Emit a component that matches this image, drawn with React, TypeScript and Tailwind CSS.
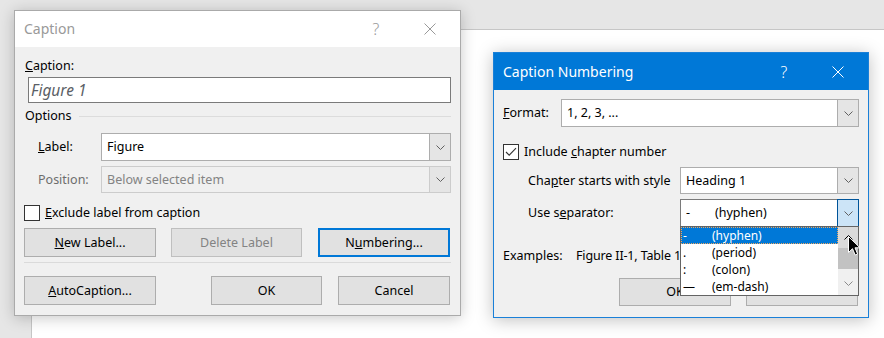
import React from "react";
import clsx from "clsx";

function Chevron({ color = "#606060", up = false }: { color?: string; up?: boolean }) {
  return (
    <svg width="9" height="5" viewBox="0 0 9 5">
      <path d={up ? "M0.5 4.5 L4.5 0.5 L8.5 4.5" : "M0.5 0.5 L4.5 4.5 L8.5 0.5"} fill="none" stroke={color} strokeWidth="1" />
    </svg>
  );
}

function XIcon({ color }: { color: string }) {
  return (
    <svg width="12" height="12" viewBox="0 0 12 12">
      <path d="M0.5 0.5 L11.5 11.5 M11.5 0.5 L0.5 11.5" stroke={color} strokeWidth="1" fill="none" />
    </svg>
  );
}

function TitleBar({ title, active }: { title: string; active: boolean }) {
  const c = active ? "#ffffff" : "#999999";
  return (
    <div
      className={clsx(
        "flex items-center pl-[9px] pr-[7px] shrink-0",
        active ? "h-[37px] bg-[#0078d7] text-white" : "h-[36px] bg-white text-[#999999]"
      )}
    >
      <span className="text-[14px] leading-none">{title}</span>
      <div className="ml-auto flex gap-[8px]">
        <div className="w-[46px] flex items-center justify-center text-[16px] font-light leading-none">?</div>
        <div className="w-[46px] flex items-center justify-center">
          <XIcon color={c} />
        </div>
      </div>
    </div>
  );
}

function Combo({
  value,
  className,
  disabled = false,
  focused = false,
}: {
  value: React.ReactNode;
  className?: string;
  disabled?: boolean;
  focused?: boolean;
}) {
  return (
    <div
      className={clsx(
        "flex items-stretch border",
        disabled ? "border-[#cccccc] bg-[#f0f0f0] text-[#838383]" : focused ? "border-[#7a7a7a] bg-white text-black" : "border-[#adadad] bg-white text-black",
        className
      )}
    >
      <div className="flex-1 flex items-center pl-[5px] whitespace-nowrap">{value}</div>
      <div
        className={clsx(
          "w-[21px] flex items-center justify-center",
          focused
            ? "bg-[#cce4f7] border border-[#005499] -my-px -mr-px w-[22px]"
            : disabled
            ? "bg-[#e5e5e5] border-l border-[#cccccc]"
            : "bg-[#e5e5e5] border-l border-[#adadad]"
        )}
      >
        <Chevron />
      </div>
    </div>
  );
}

function Btn({
  children,
  className,
  disabled = false,
  def = false,
}: {
  children: React.ReactNode;
  className?: string;
  disabled?: boolean;
  def?: boolean;
}) {
  return (
    <div
      className={clsx(
        "flex items-center justify-center bg-[#e1e1e1]",
        def ? "border-2 border-[#0078d7]" : disabled ? "border border-[#bfbfbf] text-[#838383]" : "border border-[#adadad]",
        className
      )}
    >
      {children}
    </div>
  );
}

function Check({ checked }: { checked: boolean }) {
  return (
    <div className="w-[16px] h-[16px] border border-[#333333] bg-white flex items-center justify-center shrink-0">
      {checked && (
        <svg width="12" height="10" viewBox="0 0 12 10">
          <path d="M1 5 L4.2 8.2 L11 1.2" fill="none" stroke="#333333" strokeWidth="1.1" />
        </svg>
      )}
    </div>
  );
}

function CaptionDialog() {
  return (
    <div className="absolute left-[14px] top-[10px] w-[447px] h-[306px] border border-[#aaaaaa] bg-[#f0f0f0] shadow-[0_2px_14px_rgba(0,0,0,0.22)] flex flex-col">
      <TitleBar title="Caption" active={false} />
      <div className="flex flex-col">
        <div className="mt-[11px] h-[16px] leading-[16px] pl-[10px]">
          <u>C</u>aption:
        </div>
        <div className="mt-[3px] ml-[13px] w-[423px] h-[26px] border border-[#7a7a7a] bg-white flex items-center pl-[2px] italic text-[15.5px] text-[#5b5f66]">
          Figure 1
        </div>
        <div className="mt-[5px] h-[16px] flex items-center pl-[10px] pr-[9px]">
          <span>Options</span>
          <div className="flex-1 ml-[8px] h-px bg-[#dcdcdc]" />
        </div>
        <div className="mt-[9px] h-[28px] flex items-center pl-[23px] pr-[9px]">
          <span className="w-[63px]">
            <u>L</u>abel:
          </span>
          <Combo className="flex-1 h-full" value="Figure" />
        </div>
        <div className="mt-[5px] h-[27px] flex items-center pl-[23px] pr-[9px]">
          <span className="w-[63px] text-[#6d6d6d]">Position:</span>
          <Combo className="flex-1 h-full" value="Below selected item" disabled />
        </div>
        <div className="mt-[12px] h-[16px] flex items-center pl-[9px]">
          <Check checked={false} />
          <span className="ml-[5px]">
            <u>E</u>xclude label from caption
          </span>
        </div>
        <div className="mt-[7px] h-[29px] flex pl-[9px] pr-[10px] gap-[15px]">
          <Btn className="w-[132px]">
            <span>
              <u>N</u>ew Label...
            </span>
          </Btn>
          <Btn className="w-[131px]" disabled>
            Delete Label
          </Btn>
          <Btn className="w-[132px] ml-px" def>
            <span>
              N<u>u</u>mbering...
            </span>
          </Btn>
        </div>
        <div className="mt-[5px] ml-[9px] mr-[9px] h-px bg-[#dadada]" />
        <div className="mt-[13px] h-[29px] flex pl-[9px] pr-[10px]">
          <Btn className="w-[132px]">
            <span>
              <u>A</u>utoCaption...
            </span>
          </Btn>
          <Btn className="w-[111px] ml-auto">OK</Btn>
          <Btn className="w-[112px] ml-[16px]">Cancel</Btn>
        </div>
      </div>
    </div>
  );
}

function Sep({ s, label }: { s: string; label: string }) {
  return (
    <span className="flex items-center">
      <span className="w-[29px] shrink-0">{s}</span>
      <span>{label}</span>
    </span>
  );
}

function NumberingDialog() {
  const items = [
    { s: "-", l: "(hyphen)" },
    { s: ".", l: "(period)" },
    { s: ":", l: "(colon)" },
    { s: "—", l: "(em-dash)" },
  ];
  return (
    <div className="absolute left-[493px] top-[52px] w-[376px] h-[266px] border border-[#1a80d8] bg-[#f0f0f0] shadow-[0_2px_16px_rgba(0,0,0,0.25)] flex flex-col">
      <TitleBar title="Caption Numbering" active />
      <div className="flex flex-col">
        <div className="mt-[9px] h-[28px] flex items-center pl-[9px] pr-[9px]">
          <span className="w-[58px]">
            <u>F</u>ormat:
          </span>
          <Combo className="flex-1 h-full" value="1, 2, 3, ..." />
        </div>
        <div className="mt-[17px] h-[16px] flex items-center pl-[9px]">
          <Check checked />
          <span className="ml-[5px]">
            Include <u>c</u>hapter number
          </span>
        </div>
        <div className="mt-[7px] h-[27px] flex items-center pl-[34px] pr-[9px]">
          <span className="w-[152px]">
            Cha<u>p</u>ter starts with style
          </span>
          <Combo className="flex-1 h-full" value="Heading 1" />
        </div>
        <div className="mt-[5px] h-[28px] flex items-center pl-[34px] pr-[9px]">
          <span className="w-[152px]">
            Use s<u>e</u>parator:
          </span>
          <Combo className="flex-1 h-full" value={<Sep s="-" label="(hyphen)" />} focused />
        </div>
        <div className="mt-[21px] h-[16px] flex items-center pl-[9px] whitespace-nowrap">
          <span className="w-[73px]">Examples:</span>
          <span className="tracking-[-0.15px]">Figure II-1, Table 1</span>
        </div>
        <div className="mt-[14px] h-[28px] flex justify-end pr-[10px] gap-[15px]">
          <Btn className="w-[112px]">OK</Btn>
          <Btn className="w-[112px]">Cancel</Btn>
        </div>
      </div>

      <div className="absolute left-[186px] top-[173px] w-[179px] h-[70px] border border-[#646464] bg-white flex text-[12px]">
        <div className="flex-1 flex flex-col">
          {items.map((it, i) => (
            <div
              key={i}
              className={clsx(
                "h-[17px] flex items-center pl-[2px] leading-[14px] overflow-hidden",
                i === 0 && "bg-[#0078d7] text-white outline-1 outline-dotted outline-[#f0a860] -outline-offset-1"
              )}
            >
              <Sep s={it.s} label={it.l} />
            </div>
          ))}
        </div>
        <div className="w-[20px] flex flex-col bg-[#f0f0f0]">
          <div className="h-[21px] bg-[#dadada] flex items-center justify-center">
            <Chevron up color="#000000" />
          </div>
          <div className="h-[21px] bg-[#c2c2c2]" />
          <div className="flex-1 flex items-center justify-center pt-[2px]">
            <Chevron color="#8a8a8a" />
          </div>
        </div>
      </div>
    </div>
  );
}

function Cursor() {
  return (
    <svg className="absolute left-[848px] top-[236px]" width="13" height="21" viewBox="0 0 13 21">
      <path
        d="M0.5 0.5 L0.5 16.5 L4.5 12.7 L7.2 19 L9.6 18 L7 11.8 L12 11.8 Z"
        fill="#000000"
        stroke="#ffffff"
        strokeWidth="1"
        strokeLinejoin="miter"
      />
    </svg>
  );
}

export default function App() {
  return (
    <div className="relative w-[884px] h-[338px] overflow-hidden bg-[#e6e6e6] font-['Noto_Sans',sans-serif] text-[12.5px] leading-[16px] text-black">
      <div className="absolute left-[31px] top-[29px] right-0 bottom-0 bg-white border-t border-l border-[#c6c6c6]" />
      <CaptionDialog />
      <NumberingDialog />
      <Cursor />
    </div>
  );
}
